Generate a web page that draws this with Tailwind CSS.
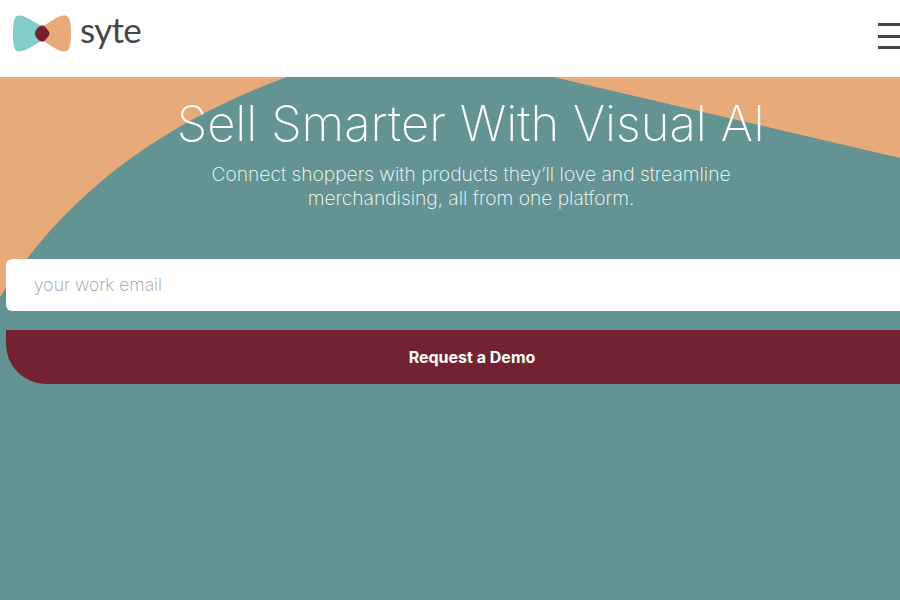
<!DOCTYPE html>
<html lang="en">
<head>
<meta charset="utf-8">
<title>Syte</title>
<script src="https://cdn.jsdelivr.net/npm/@tailwindcss/browser@4"></script>
</head>
<body class="h-[600px] w-[900px] overflow-hidden bg-[#639392] font-['Inter','Noto_Sans',sans-serif]">
<header class="flex h-[77px] w-[900px] items-start justify-between overflow-hidden bg-white pl-[13px]">
  <div class="flex items-center gap-[9px] pt-[15px]">
    <svg width="58" height="37" viewBox="0 0 58 37" aria-hidden="true">
      <path d="M5 .5C11 0 18 5 30 12L30 25C18 32 11 37 5 36.5C1 36 0 29 0 18.5C0 8 1 1 5 .5Z" fill="#82cdc9"/>
      <path d="M52 .5C46 0 40 5 26 14L26 23C40 32 46 37 52 36.5C57 36 58 29 58 18.5C58 8 57 1 52 .5Z" fill="#e8aa79"/>
      <path d="M28.5 10.5Q30.5 10 32 11.5L35.5 16Q37.5 18.5 35.5 21L32 25.5Q30.5 27 28.5 26.5Q26.5 26 24.5 24L23 22Q21 18.5 23 15L24.5 13Q26.5 11 28.5 10.5Z" fill="#75202f"/>
    </svg>
    <span class="relative -top-[4px] font-['Lato',sans-serif] text-[35px] leading-none tracking-[-0.7px] text-[#454648]">syte</span>
  </div>
  <div class="flex w-[22px] shrink-0 flex-col gap-[8.5px] pt-[23px]">
    <span class="block h-[3px] w-[22px] bg-[#444]"></span>
    <span class="block h-[3px] w-[22px] bg-[#444]"></span>
    <span class="block h-[3px] w-[22px] bg-[#444]"></span>
  </div>
</header>
<main class="relative h-[523px] w-[900px] overflow-hidden">
  <svg class="absolute inset-0" width="900" height="523" viewBox="0 0 900 523" aria-hidden="true">
    <path d="M0 0H287C170 43 70 110 0 220Z" fill="#e8aa79"/>
    <path d="M553 0H900V81Z" fill="#e8aa79"/>
  </svg>
  <div class="relative flex w-[936px] flex-col pl-[6px]">
    <h1 class="pt-[18px] text-center text-[49px] leading-[58px] font-extralight text-white">Sell Smarter With Visual AI</h1>
    <p class="mt-[9px] text-center text-[19.25px] leading-[24px] font-[250] text-white">Connect shoppers with products they’ll love and streamline<br>merchandising, all from one platform.</p>
    <input type="text" placeholder="your work email" class="mt-[49px] h-[52px] w-[930px] rounded-[6px] bg-white pb-[2px] pl-[28px] text-[17.6px] font-[250] text-[#777] placeholder:text-[#9a9aa0]">
    <button class="mt-[19px] h-[54px] w-[932px] rounded-bl-[40px] bg-[#732231] text-[16px] font-bold text-white">Request a Demo</button>
  </div>
</main>
</body>
</html>
